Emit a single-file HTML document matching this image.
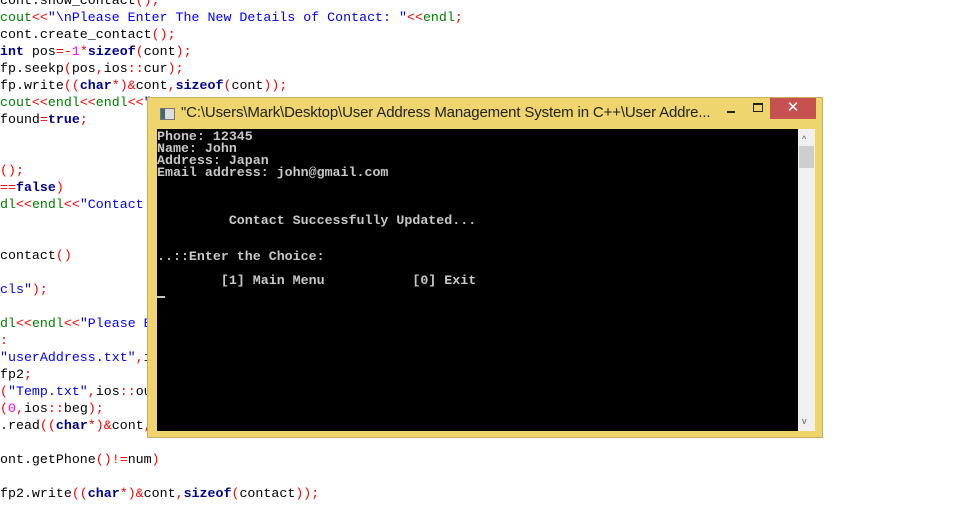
<!DOCTYPE html>
<html><head><style>
body{margin:0;width:962px;height:513px;background:#fff;position:relative;overflow:hidden;font-family:"Liberation Mono",monospace}
.code{position:absolute;left:0;top:-8px;font-size:13.3px;line-height:17px;white-space:pre;color:#000}
.k{color:#00008b;font-weight:bold}.s{color:#0000ff}.o{color:#ff0000}.g{color:#008000}.n{color:#ff00ff}
.win{position:absolute;left:147px;top:97px;width:676px;height:341px;background:#efd56e;border:1px solid #c8b060;box-sizing:border-box}
.title{position:absolute;left:33px;top:6px;width:535px;overflow:hidden;font-family:"Liberation Sans",sans-serif;font-size:15px;color:#222;white-space:nowrap;letter-spacing:-0.15px}
.ico{position:absolute;left:12px;top:10px;width:13px;height:10px;border:1px solid #777;background:linear-gradient(90deg,#3a6a6a 0 4px,#ddd 4px)}
.close{position:absolute;left:622px;top:0;width:46px;height:21px;background:#c75050;color:#fff;font-family:"Liberation Sans",sans-serif;font-size:15px;text-align:center;line-height:20px}
.con{position:absolute;left:9px;top:31px;width:641px;height:302px;background:#000}
.sb{position:absolute;left:650px;top:31px;width:17px;height:302px;background:#f0f0f0}
.thumb{position:absolute;left:1px;top:17px;width:15px;height:22px;background:#cdcdcd}
.ct{position:absolute;left:0;top:2px;font-size:13.3px;line-height:12px;color:#c8c8c8;font-weight:bold;white-space:pre}
</style></head><body>
<div class="code">cont.show_contact<span class="o">();</span>
<span class="g">cout</span><span class="o">&lt;&lt;</span><span class="s">"\nPlease Enter The New Details of Contact: "</span><span class="o">&lt;&lt;</span><span class="g">endl</span><span class="o">;</span>
cont.create_contact<span class="o">();</span>
<span class="k">int</span> pos<span class="o">=-</span><span class="n">1</span><span class="o">*</span><span class="k">sizeof</span><span class="o">(</span>cont<span class="o">);</span>
fp.seekp<span class="o">(</span>pos<span class="o">,</span>ios<span class="o">::</span>cur<span class="o">);</span>
fp.write<span class="o">((</span><span class="k">char</span><span class="o">*)&amp;</span>cont<span class="o">,</span><span class="k">sizeof</span><span class="o">(</span>cont<span class="o">));</span>
<span class="g">cout</span><span class="o">&lt;&lt;</span><span class="g">endl</span><span class="o">&lt;&lt;</span><span class="g">endl</span><span class="o">&lt;&lt;</span><span class="s">"</span>
found<span class="o">=</span><span class="k">true</span><span class="o">;</span>


<span class="o">();</span>
<span class="o">==</span><span class="k">false</span><span class="o">)</span>
<span class="g">dl</span><span class="o">&lt;&lt;</span><span class="g">endl</span><span class="o">&lt;&lt;</span><span class="s">"Contact</span>


contact<span class="o">()</span>

<span class="s">cls"</span><span class="o">);</span>

<span class="g">dl</span><span class="o">&lt;&lt;</span><span class="g">endl</span><span class="o">&lt;&lt;</span><span class="s">"Please E</span>
<span class="o">:</span>
<span class="s">"userAddress.txt"</span><span class="o">,</span>i
fp2<span class="o">;</span>
<span class="o">(</span><span class="s">"Temp.txt"</span><span class="o">,</span>ios<span class="o">::</span>ou
<span class="o">(</span><span class="n">0</span><span class="o">,</span>ios<span class="o">::</span>beg<span class="o">);</span>
.read<span class="o">((</span><span class="k">char</span><span class="o">*)&amp;</span>cont<span class="o">,</span>

ont.getPhone<span class="o">()!=</span>num<span class="o">)</span>

fp2.write<span class="o">((</span><span class="k">char</span><span class="o">*)&amp;</span>cont<span class="o">,</span><span class="k">sizeof</span><span class="o">(</span>contact<span class="o">));</span></div>
<div class="win">
<div class="ico"></div>
<div class="title">"C:\Users\Mark\Desktop\User Address Management System in C++\User Addre...</div>
<div style="position:absolute;left:579px;top:13px;width:8px;height:2px;background:#222"></div>
<div style="position:absolute;left:605px;top:5px;width:8px;height:6px;border:1px solid #222;border-top-width:2px"></div>
<div class="close">✕</div>
<div class="con"><div class="ct">Phone: 12345
Name: John
Address: Japan
Email address: john@gmail.com



         Contact Successfully Updated...


..::Enter the Choice:

        [1] Main Menu           [0] Exit
</div><div style="position:absolute;left:0;top:167px;width:8px;height:2px;background:#c8c8c8"></div></div>
<div class="sb"><div style="position:absolute;left:4px;top:5px;font-size:9px;color:#555;font-family:'Liberation Sans',sans-serif">^</div><div class="thumb"></div><div style="position:absolute;left:4px;top:287px;font-size:9px;color:#555;font-family:'Liberation Sans',sans-serif">v</div></div>
</div>
</body></html>
